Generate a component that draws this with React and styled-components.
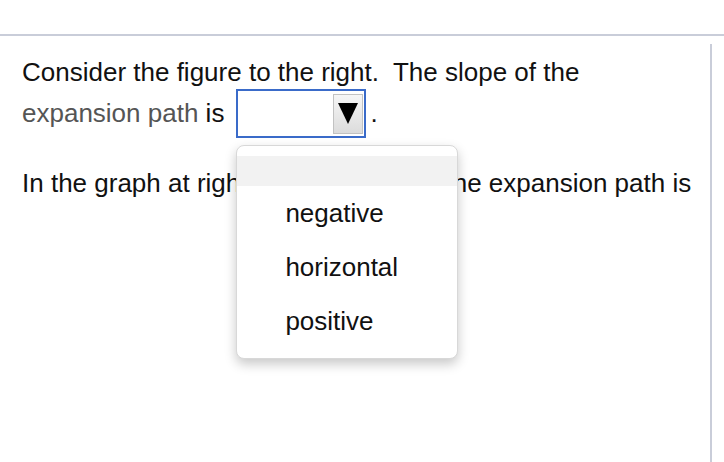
import styled, { createGlobalStyle } from 'styled-components';

const GlobalStyle = createGlobalStyle`
  html, body {
    margin: 0;
    padding: 0;
    background: #fff;
  }
  body {
    font-family: 'Liberation Sans', Arial, Helvetica, sans-serif;
    color: #111;
    overflow: hidden;
  }
`;

const Page = styled.div`
  width: 724px;
  height: 462px;
  display: flex;
  flex-direction: column;
`;

const TopBar = styled.div`
  height: 34px;
  flex: none;
  border-bottom: 2px solid #c9cdd9;
`;

const Body = styled.div`
  flex: 1;
  display: flex;
  padding-top: 8px;
`;

const Panel = styled.section`
  width: 688px;
  border-right: 2px solid #c9cdd9;
  padding: 13px 0 0 22px;
  font-size: 26px;
`;

const Line = styled.div`
  display: flex;
  align-items: center;
  height: ${(p) => p.$h || 30}px;
  margin-top: ${(p) => p.$mt || 0}px;
  white-space: pre;
`;

const Term = styled.span`
  color: #555;
`;

const SelectWrap = styled.div`
  position: relative;
  margin-left: 12px;
`;

const SelectBox = styled.div`
  box-sizing: border-box;
  width: 130px;
  height: 49px;
  border: 2px solid #3a6bc9;
  display: flex;
  align-items: center;
  justify-content: flex-end;
  padding-right: 1px;
`;

const ArrowButton = styled.div`
  box-sizing: border-box;
  width: 30px;
  height: 40px;
  border: 1px solid #c2c2c2;
  background: linear-gradient(#f6f6f6, #dcdcdc);
  display: flex;
  align-items: center;
  justify-content: center;
`;

const Period = styled.span`
  margin-left: 4px;
`;

const Menu = styled.ul`
  position: absolute;
  top: calc(100% + 7px);
  left: 0;
  box-sizing: border-box;
  width: 222px;
  margin: 0;
  padding: 10px 0;
  list-style: none;
  background: #fff;
  border: 1px solid #d8d8d8;
  border-radius: 8px;
  box-shadow: 0 5px 12px rgba(0, 0, 0, 0.22);
  z-index: 10;
`;

const Option = styled.li`
  height: ${(p) => (p.$empty ? 30 : 54)}px;
  display: flex;
  align-items: center;
  padding-left: 48px;
  background: ${(p) => (p.$active ? '#f2f2f2' : 'transparent')};
  color: #111;
  font-size: 26px;
`;

const options = ['negative', 'horizontal', 'positive'];

export default function App() {
  return (
    <Page>
      <GlobalStyle />
      <TopBar />
      <Body>
        <Panel>
          <Line>Consider the figure to the right.  The slope of the</Line>
          <Line $h={49} $mt={2}>
            <span>
              <Term>expansion path</Term> is
            </span>
            <SelectWrap>
              <SelectBox>
                <ArrowButton>
                  <svg width="20" height="21" viewBox="0 0 20 21">
                    <polygon points="0,0 20,0 10,21" fill="#000" />
                  </svg>
                </ArrowButton>
              </SelectBox>
              <Menu>
                <Option $empty $active />
                {options.map((o) => (
                  <Option key={o}>{o}</Option>
                ))}
              </Menu>
            </SelectWrap>
            <Period>.</Period>
          </Line>
          <Line $mt={30}>
            In the graph at right, as output rises, the expansion path is
          </Line>
        </Panel>
      </Body>
    </Page>
  );
}
